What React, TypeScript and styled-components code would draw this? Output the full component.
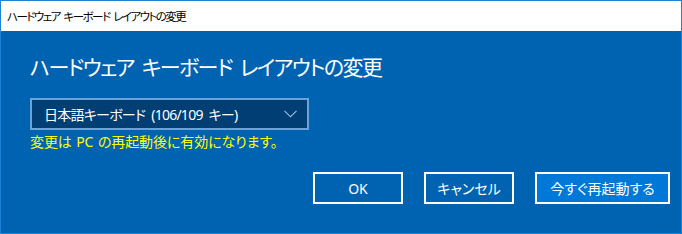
import React from "react";
import styled, { createGlobalStyle } from "styled-components";

const Global = createGlobalStyle`
  html, body { margin: 0; padding: 0; background: #ffffff; }
  #root { width: 682px; height: 234px; }
  * { box-sizing: border-box; }
`;

const FONT = `"Noto Sans", "Noto Sans CJK JP", sans-serif`;

const Window = styled.div`
  width: 682px;
  height: 234px;
  border: 1px solid #1b84d8;
  display: flex;
  flex-direction: column;
  font-family: ${FONT};
  font-feature-settings: "palt";
`;

const TitleBar = styled.div`
  height: 30px;
  flex: none;
  background: #ffffff;
  display: flex;
  align-items: center;
  padding-left: 6px;
  font-size: 11.5px;
  color: #000000;
  word-spacing: 2px;
  letter-spacing: -1.5px;
`;

const Body = styled.div`
  flex: 1;
  background: #0063b1;
  padding: 22px 11px 0 29px;
  display: flex;
  flex-direction: column;
`;

const Heading = styled.h1`
  margin: 0;
  font-weight: 400;
  font-size: 21px;
  line-height: 28px;
  color: #ffffff;
  word-spacing: 4px;
  letter-spacing: -1.55px;
`;

const Select = styled.div`
  margin-top: 17px;
  width: 279px;
  height: 32px;
  border: 2px solid #6aa3d8;
  background: #003e73;
  display: flex;
  align-items: center;
  justify-content: space-between;
  padding: 0 10px 0 12px;
  color: #ffffff;
  font-size: 14px;
  word-spacing: 3px;
  letter-spacing: -0.75px;
`;

const Note = styled.div`
  margin-top: 2px;
  color: #ffff00;
  font-size: 14px;
  line-height: 19px;
  word-spacing: 1px;
  letter-spacing: -0.1px;
`;

const Buttons = styled.div`
  margin-top: 21px;
  display: flex;
  justify-content: flex-end;
  gap: 21px;
`;

const Button = styled.button<{ $primary?: boolean; $w: number }>`
  width: ${(p) => p.$w}px;
  height: 32px;
  border: 2px solid #ffffff;
  background: ${(p) => (p.$primary ? "#0078d7" : "#0063b1")};
  color: #ffffff;
  font-family: ${FONT};
  font-feature-settings: "palt";
  font-size: 14px;
  padding: 0;
  display: flex;
  align-items: center;
  justify-content: center;
`;

const Chevron = () => (
  <svg width="13" height="8" viewBox="0 0 13 8" fill="none">
    <path d="M0.5 0.8 L6.5 6.8 L12.5 0.8" stroke="#9fc3e6" strokeWidth="1.1" />
  </svg>
);

export default function App() {
  return (
    <>
      <Global />
      <Window>
        <TitleBar>ハードウェア キーボード レイアウトの変更</TitleBar>
        <Body>
          <Heading>ハードウェア キーボード レイアウトの変更</Heading>
          <Select>
            <span>日本語キーボード (106/109 キー)</span>
            <Chevron />
          </Select>
          <Note>変更は PC の再起動後に有効になります。</Note>
          <Buttons>
            <Button $w={90}>OK</Button>
            <Button $w={90}>キャンセル</Button>
            <Button $w={135} $primary>
              今すぐ再起動する
            </Button>
          </Buttons>
        </Body>
      </Window>
    </>
  );
}
